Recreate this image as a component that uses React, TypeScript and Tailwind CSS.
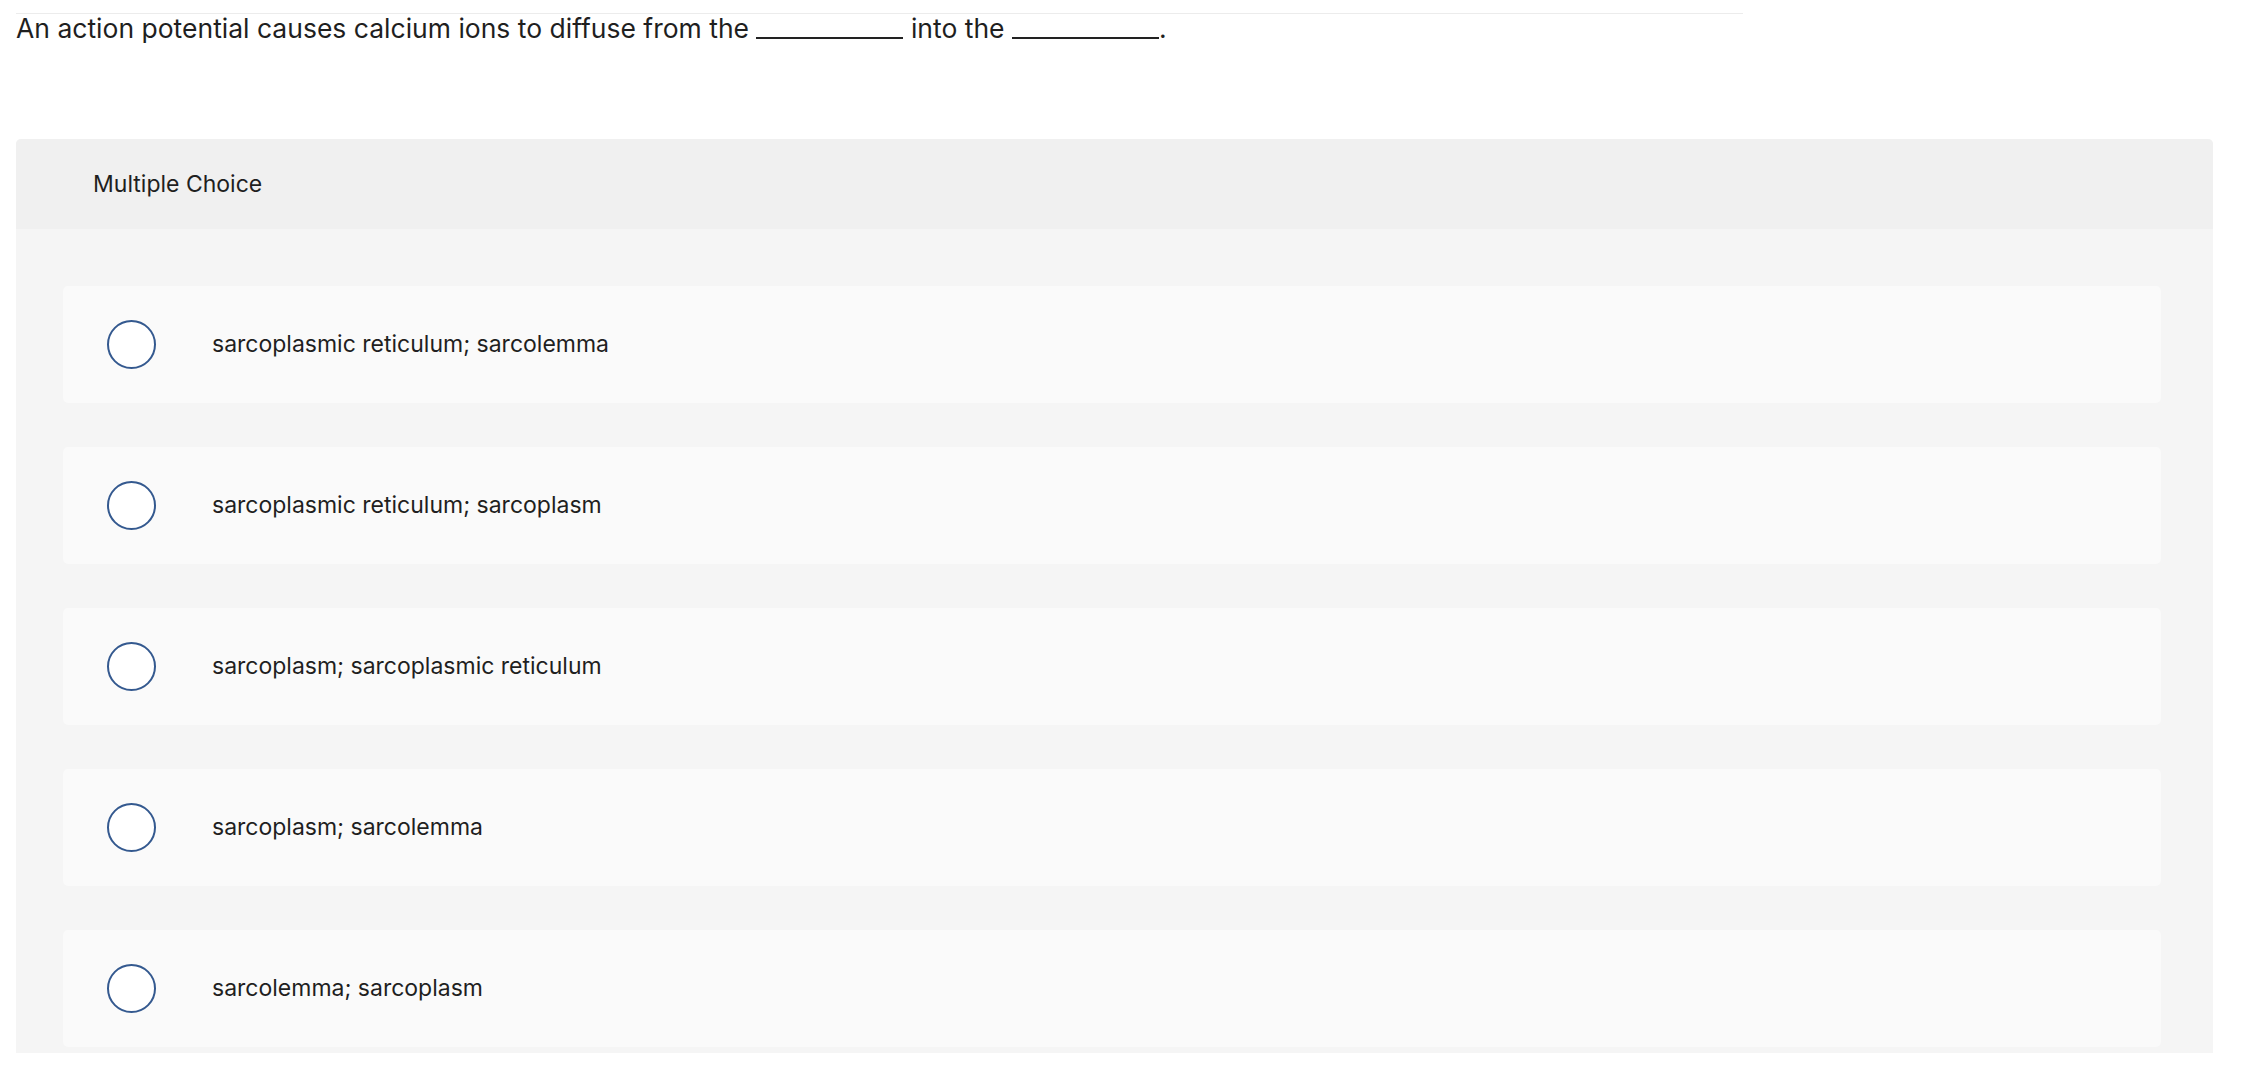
import React from 'react';

const choices = [
  'sarcoplasmic reticulum; sarcolemma',
  'sarcoplasmic reticulum; sarcoplasm',
  'sarcoplasm; sarcoplasmic reticulum',
  'sarcoplasm; sarcolemma',
  'sarcolemma; sarcoplasm',
];

const Blank = () => (
  <span className="inline-block w-[147px] border-b-[2px] border-[#222] align-baseline translate-y-[1px]" />
);

export default function App() {
  return (
    <div className="min-h-screen bg-white text-[#1f1f1f]" style={{ fontFamily: 'Inter, Lato, sans-serif' }}>
      <div className="w-[1727px] ml-[16px] pt-[13px] border-b border-[#ececec]" />
      <p className="pl-[16px] pt-[0px] text-[26.5px] leading-[28px]">
        An action potential causes calcium ions to diffuse from the <Blank /> into the <Blank />.
      </p>

      <div className="ml-[16px] mt-[97px] w-[2197px] rounded-t-[5px] bg-[#f5f5f5] pb-[6px]">
        <div className="h-[90px] flex items-center pl-[77px] bg-[#f0f0f0] rounded-t-[5px] text-[23px]">
          Multiple Choice
        </div>
        <div className="pt-[57px] pl-[47px] pr-[52px] flex flex-col gap-[44px]">
          {choices.map((c) => (
            <label
              key={c}
              className="h-[117px] rounded-[5px] bg-[#fafafa] flex items-center pl-[44px] cursor-pointer"
            >
              <span className="w-[49px] h-[49px] rounded-full border-2 border-[#34598f] bg-white shrink-0" />
              <span className="ml-[56px] text-[23px]">{c}</span>
            </label>
          ))}
        </div>
      </div>
    </div>
  );
}
